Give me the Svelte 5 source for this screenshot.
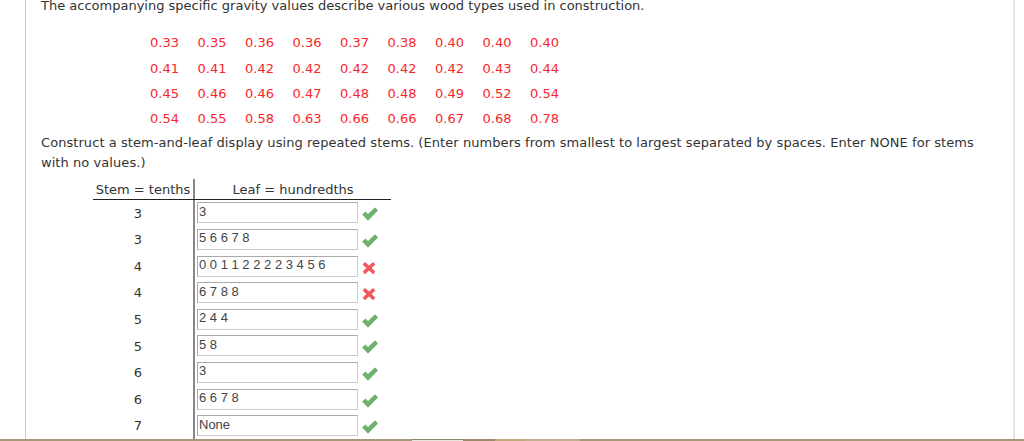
<script>
  const values = [
    ['0.33', '0.35', '0.36', '0.36', '0.37', '0.38', '0.40', '0.40', '0.40'],
    ['0.41', '0.41', '0.42', '0.42', '0.42', '0.42', '0.42', '0.43', '0.44'],
    ['0.45', '0.46', '0.46', '0.47', '0.48', '0.48', '0.49', '0.52', '0.54'],
    ['0.54', '0.55', '0.58', '0.63', '0.66', '0.66', '0.67', '0.68', '0.78']
  ];

  const rows = [
    { stem: 3, leaf: '3', ok: true },
    { stem: 3, leaf: '5 6 6 7 8', ok: true },
    { stem: 4, leaf: '0 0 1 1 2 2 2 2 3 4 5 6', ok: false },
    { stem: 4, leaf: '6 7 8 8', ok: false },
    { stem: 5, leaf: '2 4 4', ok: true },
    { stem: 5, leaf: '5 8', ok: true },
    { stem: 6, leaf: '3', ok: true },
    { stem: 6, leaf: '6 6 7 8', ok: true },
    { stem: 7, leaf: 'None', ok: true }
  ];
</script>

<main>
  <p class="intro">The accompanying specific gravity values describe various wood types used in construction.</p>

  <div class="values">
    {#each values as line}
      <div class="value-row">
        {#each line as v}
          <span>{v}</span>
        {/each}
      </div>
    {/each}
  </div>

  <p class="task">Construct a stem-and-leaf display using repeated stems. (Enter numbers from smallest to largest separated by spaces. Enter NONE for stems with no values.)</p>

  <div class="table">
    <div class="head">
      <div class="stem-head">Stem = tenths</div>
      <div class="leaf-head">Leaf = hundredths</div>
    </div>
    {#each rows as row}
      <div class="row">
        <div class="stem">{row.stem}</div>
        <div class="leaf">
          <input type="text" value={row.leaf} readonly />
          {#if row.ok}
            <svg class="check" viewBox="0 0 16 14" width="16" height="14" aria-label="correct">
              <path d="M0.6 7.6 L3.4 5 L6 7.4 L13 0.8 L15.6 3.4 L6 13.2 Z" fill="#6cb46c" stroke="#4f9a52" stroke-width="0.6" />
            </svg>
          {:else}
            <svg class="cross" viewBox="0 0 14 14" width="14" height="14" aria-label="incorrect">
              <path d="M3 1 L7 4.6 L11 1 L13.4 3.4 L9.6 7 L13.4 10.8 L11 13.2 L7 9.4 L3 13.2 L0.6 10.8 L4.4 7 L0.6 3.4 Z" fill="#f4585c" />
            </svg>
          {/if}
        </div>
      </div>
    {/each}
  </div>
</main>

<div class="strip">
  <i class="s1"></i><i class="s2"></i><i class="s3"></i><i class="s4"></i><i class="s5"></i><i class="s6"></i>
</div>

<style>
  :global(body) {
    margin: 0;
    background: #fff;
    overflow: hidden;
  }
  main {
    box-sizing: border-box;
    width: 990px;
    height: 439px;
    overflow: hidden;
    margin-left: 25px;
    padding-left: 15px;
    border-left: 1px solid #ccc;
    border-right: 2px solid #e6e6e6;
    font-family: "DejaVu Sans", Verdana, sans-serif;
    font-size: 13px;
    color: #333;
  }
  p {
    margin: 0;
  }
  .intro {
    line-height: 16px;
    margin-top: -2px;
    height: 32px;
  }
  .values {
    padding-left: 109px;
    color: #f8262c;
  }
  .value-row {
    display: flex;
    height: 25.4px;
    align-items: center;
  }
  .value-row span {
    width: 47.5px;
  }
  .task {
    line-height: 20px;
    width: 950px;
    margin-top: 1px;
    letter-spacing: 0.065px;
  }
  .table {
    margin-left: 52px;
    margin-top: 6px;
    width: 298px;
  }
  .head {
    display: flex;
    border-bottom: 1px solid #222;
    height: 20px;
    line-height: 22px;
  }
  .stem-head {
    width: 100px;
    text-align: center;
    border-right: 2px solid #888;
  }
  .leaf-head {
    flex: 1;
    text-align: center;
  }
  .row {
    display: flex;
    height: 26.6px;
  }
  .stem {
    box-sizing: content-box;
    width: 90px;
    padding-right: 10px;
    border-right: 2px solid #888;
    text-align: center;
    line-height: 28px;
  }
  .leaf {
    display: flex;
    align-items: center;
    padding-left: 2px;
    gap: 4px;
  }
  input {
    box-sizing: border-box;
    width: 161px;
    height: 21px;
    margin: 0;
    padding: 0 1px 3px;
    border: 1px solid #aaa;
    border-bottom-color: #ccc;
    border-right-color: #ccc;
    font-family: "Liberation Sans", Arial, sans-serif;
    font-size: 13px;
    color: #444;
    background: #fff;
    outline: none;
  }
  .check, .cross {
    margin-top: 3px;
  }
  .strip {
    display: flex;
    height: 2px;
    background: #a8987a;
  }
  .strip i {
    display: block;
  }
  .s1 { width: 412px; }
  .s2 { width: 51px; background: #e8e6df; border-top: 1px solid #8a8470; height: 1px; }
  .s3 { width: 32px; background: #9c8a6a; }
  .s4 { width: 30px; background: #c0a878; }
  .s5 { width: 55px; background: #c0b090; }
  .s6 { flex: 1; }
</style>
